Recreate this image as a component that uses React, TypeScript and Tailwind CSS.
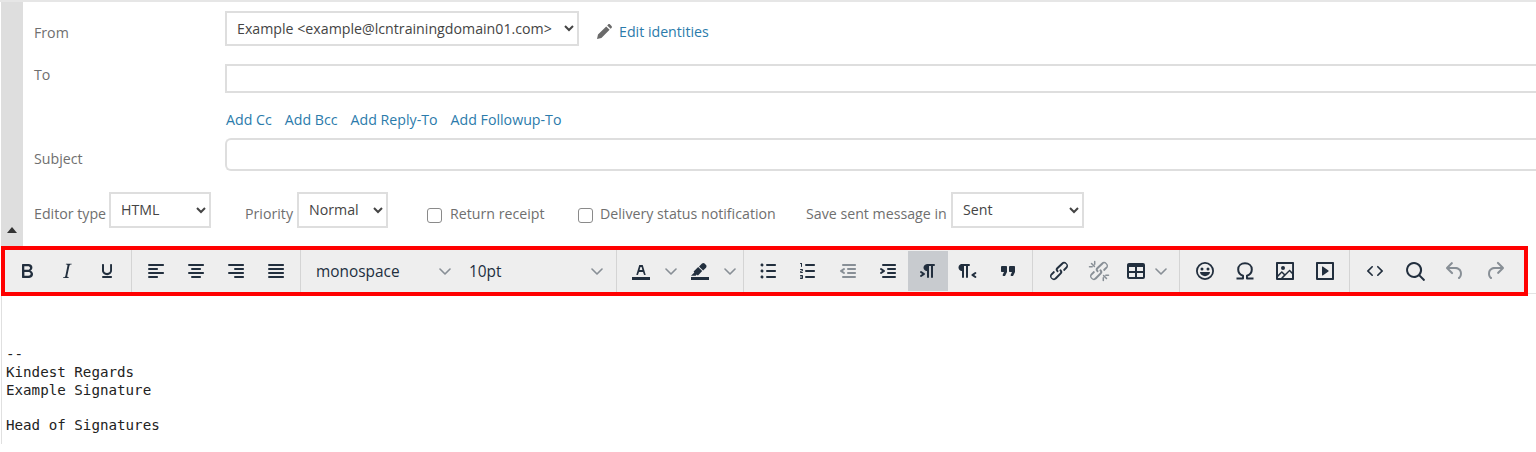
import React from "react";

const P: Record<string, React.ReactNode> = {
  bold: <path d="M7.8 19c-.3 0-.5 0-.6-.2l-.2-.5V5.7c0-.2 0-.4.2-.5l.6-.2h5c1.5 0 2.7.3 3.5 1 .7.6 1.1 1.4 1.1 2.5a3 3 0 01-.6 1.9c-.4.6-1 1-1.6 1.2.4.1.9.3 1.3.6s.8.7 1 1.2c.4.4.5 1 .5 1.6 0 1.3-.4 2.3-1.3 3-.8.7-2.1 1-3.8 1H7.8zm5-8.3c.6 0 1.2-.1 1.6-.5.4-.3.6-.7.6-1.3 0-1.1-.8-1.7-2.3-1.7H9.3v3.5h3.4zm.5 6c.7 0 1.3-.1 1.7-.4.4-.4.6-.9.6-1.5s-.2-1-.7-1.4c-.4-.3-1-.4-2-.4H9.4v3.8h4z" />,
  italic: <path d="M16.7 4.7l-.1.9h-.3c-.6 0-1 0-1.4.3-.3.3-.4.6-.5 1.1l-2.1 9.8v.6c0 .5.4.8 1.4.8h.2l-.2.8H8l.2-.8h.2c1.1 0 1.8-.5 2-1.5l2-9.8.1-.5c0-.6-.4-.8-1.4-.8h-.3l.2-.9h5.8z" />,
  underline: <path d="M16 5c.6 0 1 .4 1 1v5.5a4 4 0 01-.4 1.8l-1 1.4a5.3 5.3 0 01-5.5 1 5 5 0 01-1.6-1c-.5-.4-.8-.9-1.1-1.4a4 4 0 01-.4-1.8V6c0-.6.4-1 1-1s1 .4 1 1v5.5c0 .3 0 .6.2 1l.6.7a3.3 3.3 0 002.2.8 3.4 3.4 0 002.2-.8c.3-.2.5-.5.7-.8l.2-.9V6c0-.6.4-1 1-1zM8 17h8c.6 0 1 .4 1 1s-.4 1-1 1H8a1 1 0 010-2z" />,
  alignLeft: <path d="M5 5h14c.6 0 1 .4 1 1s-.4 1-1 1H5a1 1 0 110-2zm0 4h8c.6 0 1 .4 1 1s-.4 1-1 1H5a1 1 0 110-2zm0 8h8c.6 0 1 .4 1 1s-.4 1-1 1H5a1 1 0 010-2zm0-4h14c.6 0 1 .4 1 1s-.4 1-1 1H5a1 1 0 010-2z" />,
  alignCenter: <path d="M5 5h14c.6 0 1 .4 1 1s-.4 1-1 1H5a1 1 0 110-2zm3 4h8c.6 0 1 .4 1 1s-.4 1-1 1H8a1 1 0 110-2zm0 8h8c.6 0 1 .4 1 1s-.4 1-1 1H8a1 1 0 010-2zm-3-4h14c.6 0 1 .4 1 1s-.4 1-1 1H5a1 1 0 010-2z" />,
  alignRight: <path d="M5 5h14c.6 0 1 .4 1 1s-.4 1-1 1H5a1 1 0 110-2zm6 4h8c.6 0 1 .4 1 1s-.4 1-1 1h-8a1 1 0 010-2zm0 8h8c.6 0 1 .4 1 1s-.4 1-1 1h-8a1 1 0 010-2zm-6-4h14c.6 0 1 .4 1 1s-.4 1-1 1H5a1 1 0 010-2z" />,
  alignJustify: <path d="M5 5h14c.6 0 1 .4 1 1s-.4 1-1 1H5a1 1 0 110-2zm0 4h14c.6 0 1 .4 1 1s-.4 1-1 1H5a1 1 0 110-2zm0 4h14c.6 0 1 .4 1 1s-.4 1-1 1H5a1 1 0 010-2zm0 4h14c.6 0 1 .4 1 1s-.4 1-1 1H5a1 1 0 010-2z" />,
  textColor: <><path d="M3 18h18v3H3z" /><path d="M8.7 16h-.8a.5.5 0 01-.5-.6l2.7-9c.1-.3.3-.4.5-.4h2.8c.2 0 .4.1.5.4l2.7 9a.5.5 0 01-.5.6h-.8a.5.5 0 01-.4-.4l-.7-2.2c0-.3-.3-.4-.5-.4h-3.4c-.2 0-.4.1-.5.4l-.7 2.2c0 .3-.2.4-.4.4zm2.6-7.6l-.6 2a.5.5 0 00.5.6h1.6a.5.5 0 00.5-.6l-.6-2c0-.3-.3-.4-.5-.4h-.4c-.2 0-.4.1-.5.4z" /></>,
  highlight: <><path d="M3 18h18v3H3z" /><path d="M7.7 16.7H3l3.3-3.3-.7-.8L10.2 8l4 4.1-4 4.2c-.2.2-.6.2-.8 0l-.6-.7-1.1 1.1zm5-7.5L11 7.4l3-2.9a2 2 0 012.6 0L18 6c.7.7.7 2 0 2.7l-2.9 2.9-1.8-1.8-.5-.6z" /></>,
  bullets: <path d="M11 5h8c.6 0 1 .4 1 1s-.4 1-1 1h-8a1 1 0 010-2zm0 6h8c.6 0 1 .4 1 1s-.4 1-1 1h-8a1 1 0 010-2zm0 6h8c.6 0 1 .4 1 1s-.4 1-1 1h-8a1 1 0 010-2zM4.5 6c0-.4.1-.8.4-1 .3-.4.7-.5 1.1-.5.4 0 .8.1 1 .4.4.3.5.7.5 1.1 0 .4-.1.8-.4 1-.3.4-.7.5-1.1.5-.4 0-.8-.1-1-.4-.4-.3-.5-.7-.5-1.1zm0 6c0-.4.1-.8.4-1 .3-.4.7-.5 1.1-.5.4 0 .8.1 1 .4.4.3.5.7.5 1.1 0 .4-.1.8-.4 1-.3.4-.7.5-1.1.5-.4 0-.8-.1-1-.4-.4-.3-.5-.7-.5-1.1zm0 6c0-.4.1-.8.4-1 .3-.4.7-.5 1.1-.5.4 0 .8.1 1 .4.4.3.5.7.5 1.1 0 .4-.1.8-.4 1-.3.4-.7.5-1.1.5-.4 0-.8-.1-1-.4-.4-.3-.5-.7-.5-1.1z" />,
  numbers: <path d="M10 17h8c.6 0 1 .4 1 1s-.4 1-1 1h-8a1 1 0 010-2zm0-6h8c.6 0 1 .4 1 1s-.4 1-1 1h-8a1 1 0 010-2zm0-6h8c.6 0 1 .4 1 1s-.4 1-1 1h-8a1 1 0 110-2zM6 4v3.5c0 .3-.2.5-.5.5a.5.5 0 01-.5-.5V5h-.5a.5.5 0 010-1H6zm-1 8.8l.2.2h1.3c.3 0 .5.2.5.5s-.2.5-.5.5H4.9a1 1 0 01-.9-1V13c0-.4.3-.8.6-1l1.2-.4.2-.3a.2.2 0 00-.2-.2H4.5a.5.5 0 01-.5-.5c0-.3.2-.5.5-.5h1.6c.5 0 .9.4.9 1v.1c0 .4-.3.8-.6 1l-1.2.4-.2.3zM7 17v2c0 .6-.4 1-1 1H4.5a.5.5 0 010-1h1.2c.2 0 .3-.1.3-.3 0-.2-.1-.3-.3-.3H4.4a.4.4 0 110-.8h1.3c.2 0 .3-.1.3-.3 0-.2-.1-.3-.3-.3H4.5a.5.5 0 110-1H6c.6 0 1 .4 1 1z" />,
  outdent: <path d="M7 5h12c.6 0 1 .4 1 1s-.4 1-1 1H7a1 1 0 110-2zm5 4h7c.6 0 1 .4 1 1s-.4 1-1 1h-7a1 1 0 010-2zm0 4h7c.6 0 1 .4 1 1s-.4 1-1 1h-7a1 1 0 010-2zm-5 4h12a1 1 0 010 2H7a1 1 0 010-2zm1.6-3.8a1 1 0 01-1.2 1.6l-3-2a1 1 0 010-1.6l3-2a1 1 0 011.2 1.6L6.8 12l1.8 1.2z" />,
  indent: <path d="M7 5h12c.6 0 1 .4 1 1s-.4 1-1 1H7a1 1 0 110-2zm5 4h7c.6 0 1 .4 1 1s-.4 1-1 1h-7a1 1 0 010-2zm0 4h7c.6 0 1 .4 1 1s-.4 1-1 1h-7a1 1 0 010-2zm-5 4h12a1 1 0 010 2H7a1 1 0 010-2zm-2.6-3.8L6.2 12l-1.8-1.2a1 1 0 011.2-1.6l3 2a1 1 0 010 1.6l-3 2a1 1 0 11-1.2-1.6z" />,
  ltr: <path d="M11 5h7a1 1 0 010 2h-1v11a1 1 0 01-2 0V7h-2v11a1 1 0 01-2 0v-6c-.5 0-1 0-1.4-.3A3.4 3.4 0 017.8 10a3.3 3.3 0 010-2.8 3.4 3.4 0 011.8-1.8L11 5zM4.4 16.2L6.2 15l-1.8-1.2a1 1 0 011.2-1.6l3 2a1 1 0 010 1.6l-3 2a1 1 0 11-1.2-1.6z" />,
  rtl: <><path transform="translate(-3 0)" d="M8 5h8a1 1 0 010 2h-1v11a1 1 0 01-2 0V7h-2v11a1 1 0 01-2 0v-6c-.5 0-1 0-1.4-.3a3.4 3.4 0 01-1.8-1.8 3.3 3.3 0 010-2.8 3.4 3.4 0 011.8-1.8L8 5z" /><path d="M20 14.8L18.2 16l1.8 1.2a1 1 0 01-1.2 1.6l-3-2a1 1 0 010-1.6l3-2a1 1 0 011.2 1.6z" /></>,
  quote: <path d="M7.5 17h.9c.4 0 .7-.2.9-.6L11 13V8c0-.6-.4-1-1-1H6a1 1 0 00-1 1v4c0 .6.4 1 1 1h2l-1.3 2.7a1 1 0 00.8 1.3zm8 0h.9c.4 0 .7-.2.9-.6L19 13V8c0-.6-.4-1-1-1h-4a1 1 0 00-1 1v4c0 .6.4 1 1 1h2l-1.3 2.7a1 1 0 00.8 1.3z" />,
  link: <path d="M6.2 12.3a1 1 0 011.4 1.4l-2 2a2 2 0 102.6 2.8l4.8-4.8a1 1 0 000-1.4 1 1 0 111.4-1.3 2.9 2.9 0 010 4L9.6 20a3.9 3.9 0 01-5.5-5.5l2-2zm11.6-.6a1 1 0 01-1.4-1.4l2-2a2 2 0 10-2.6-2.8L11 9.9a1 1 0 000 1.4 1 1 0 11-1.4 1.3 2.9 2.9 0 010-4L14.4 4a3.9 3.9 0 015.5 5.5l-2 2z" />,
  unlink: <><path d="M6.2 12.3a1 1 0 011.4 1.4l-2.1 2a2 2 0 102.7 2.8l4.8-4.8a1 1 0 000-1.4 1 1 0 111.4-1.3 2.9 2.9 0 010 4L9.6 20a3.9 3.9 0 01-5.5-5.5l2-2zm11.6-.6a1 1 0 01-1.4-1.4l2.1-2a2 2 0 10-2.7-2.8L11 9.9a1 1 0 000 1.4 1 1 0 11-1.4 1.3 2.9 2.9 0 010-4L14.4 4a3.9 3.9 0 015.5 5.5l-2 2z" /><path d="M7.4 7.4L4.5 4.5M7.7 2.5v2.7M2.5 7.7h2.7M16.6 16.6l2.9 2.9M16.3 21.5v-2.7M21.5 16.3h-2.7" stroke="currentColor" strokeWidth="1.5" strokeLinecap="round" fill="none" /></>,
  table: <path d="M19 4a2 2 0 012 2v12a2 2 0 01-2 2H5a2 2 0 01-2-2V6c0-1.1.9-2 2-2h14zM5 14v4h6v-4H5zm14 0h-6v4h6v-4zm0-6h-6v4h6V8zM5 12h6V8H5v4z" />,
  emoji: <path fillRule="evenodd" d="M12 3a9 9 0 110 18 9 9 0 010-18zm0 1.8a7.2 7.2 0 100 14.4 7.2 7.2 0 000-14.4zM9 8.5a1.5 1.5 0 110 3 1.5 1.5 0 010-3zm6 0a1.5 1.5 0 110 3 1.5 1.5 0 010-3zM7.5 13h9a.5.5 0 01.5.6c-.5 2.1-2.5 3.6-5 3.6s-4.5-1.5-5-3.6a.5.5 0 01.5-.6z" />,
  omega: <path fill="none" stroke="currentColor" strokeWidth="2" strokeLinejoin="round" d="M3.5 19.5H10v-2.8c-2.8-1-4.8-3.4-4.8-6.3C5.2 6.7 8.2 4.3 12 4.3s6.8 2.4 6.8 6.1c0 2.9-2 5.3-4.8 6.3v2.8h6.5" />,
  image: <path d="M5 15.7l3.3-3.2c.3-.3.7-.3 1 0L12 15l4.1-4c.3-.4.8-.4 1 0l2 1.9V5H5v10.7zM5 18V19h3l2.8-2.9-2-2L5 17.9zm14-3l-2.5-2.4-6.4 6.5H19v-4zM4 3h16c.6 0 1 .4 1 1v16c0 .6-.4 1-1 1H4a1 1 0 01-1-1V4c0-.6.4-1 1-1zm6 8a2 2 0 100-4 2 2 0 000 4z" />,
  media: <path d="M4 3h16c.6 0 1 .4 1 1v16c0 .6-.4 1-1 1H4a1 1 0 01-1-1V4c0-.6.4-1 1-1zm1 2v14h14V5H5zm4.8 2.6l5.6 4a.5.5 0 010 .8l-5.6 4A.5.5 0 019 16V8a.5.5 0 01.8-.4z" />,
  code: <path d="M9.8 15.7c.3.3.3.8 0 1-.3.4-.9.4-1.2 0l-4.4-4.1a.8.8 0 010-1.2l4.4-4.2c.3-.3.9-.3 1.2 0 .3.3.3.8 0 1.1L6 12l3.8 3.7zm4.4 0c-.3.3-.3.8 0 1 .3.4.9.4 1.2 0l4.4-4.1a.8.8 0 000-1.2l-4.4-4.2a.8.8 0 00-1.2 0c-.3.3-.3.8 0 1.1L18 12l-3.8 3.7z" />,
  search: <path d="M16 17.3a8 8 0 111.4-1.4l4.3 4.4a1 1 0 01-1.4 1.4l-4.4-4.4zm-5-.3a6 6 0 100-12 6 6 0 000 12z" />,
  undo: <path d="M6.4 8H12c3.7 0 6.2 2 6.8 5.1.6 2.7-.4 5.6-2.3 6.8a1 1 0 01-1-1.8c1.1-.6 1.8-2.7 1.4-4.6-.5-2.1-2.1-3.5-4.9-3.5H6.4l3.3 3.3a1 1 0 11-1.4 1.4l-5-5a1 1 0 010-1.4l5-5a1 1 0 011.4 1.4L6.4 8z" />,
  redo: <path d="M17.6 10H12c-2.8 0-4.4 1.4-4.9 3.5-.4 2 .3 4 1.4 4.6a1 1 0 11-1 1.8c-2-1.2-2.9-4.1-2.3-6.8.6-3 3.1-5.1 6.8-5.1h5.6l-3.3-3.3a1 1 0 111.4-1.4l5 5a1 1 0 010 1.4l-5 5a1 1 0 01-1.4-1.4l3.3-3.3z" />,
};

function Btn({ name, dim, active, w = "w-10" }: { name: string; dim?: boolean; active?: boolean; w?: string }) {
  return (
    <button className={`${w} h-10 flex items-center justify-center ${active ? "bg-[#c8cbcf]" : ""} ${dim ? "text-[#222f3e]/50" : "text-[#222f3e]"}`}>
      <svg width="24" height="24" viewBox="0 0 24 24" fill="currentColor">{P[name]}</svg>
    </button>
  );
}

function Chev({ w = "w-[19px]" }: { w?: string }) {
  return (
    <span className={`${w} h-10 flex items-center justify-center`}>
      <svg width="12" height="7" viewBox="0 0 12 7" fill="none" stroke="#222f3e" strokeOpacity="0.5" strokeWidth="1.6" strokeLinecap="round" strokeLinejoin="round"><path d="M1 1l5 5 5-5" /></svg>
    </span>
  );
}

function Group({ className, children }: { className: string; children: React.ReactNode }) {
  return <div className={`flex items-center border-r border-[#d4d4d4] last:border-r-0 ${className}`}>{children}</div>;
}

function FontSel({ label, w, pr }: { label: string; w: string; pr: string }) {
  return (
    <div className={`${w} ${pr} pl-[11px] h-10 flex items-center justify-between text-[15.4px] text-[#222f3e]`}>
      <span className="translate-y-[1px]">{label}</span>
      <svg width="12" height="7" viewBox="0 0 12 7" fill="none" stroke="#222f3e" strokeOpacity="0.5" strokeWidth="1.6" strokeLinecap="round" strokeLinejoin="round"><path d="M1 1l5 5 5-5" /></svg>
    </div>
  );
}

const labelCls = "text-[14.2px] leading-[20px] text-[#6f6f6f] whitespace-nowrap";
const linkCls = "text-[14.2px] leading-[20px] text-[#2b7bab] whitespace-nowrap";
const selectCls = "bg-white border-2 border-[#dedede] text-[14.2px] text-[#444] h-9 pl-[6px] pb-[1px] outline-none";

export default function App() {
  return (
    <div className="w-[1536px] h-[452px] overflow-hidden bg-white font-['Open_Sans',sans-serif]">
      <div className="flex h-[246px] border-t-2 border-[#e6e6e6]">
        <div className="ml-[1px] w-[22px] bg-[#dedede] flex flex-col items-center justify-end pb-[13px]">
          <svg width="10" height="6" viewBox="0 0 10 6" fill="#333"><path d="M5 0l5 6H0z" /></svg>
        </div>
        <div className="flex-1 min-w-0 flex flex-col pt-[9px]">
          <div className="flex items-start">
            <label className={`${labelCls} w-[202px] pl-[11px] mt-[12px]`}>From</label>
            <select className={`${selectCls} w-[354px] h-[35px]`} defaultValue="a">
              <option value="a">Example &lt;example@lcntrainingdomain01.com&gt;</option>
            </select>
            <svg className="ml-[18px] mt-[13px]" width="15" height="15" viewBox="0 0 15 15" fill="#6a6a6a"><path d="M0 15l1-4.4L9.2 2.4l3.4 3.4L4.4 14zM10.2 1.4l.9-.9c.6-.6 1.4-.6 2 0l1.4 1.4c.6.6.6 1.4 0 2l-.9.9z" /></svg>
            <a className={`${linkCls} ml-[7px] mt-[11px]`}>Edit identities</a>
          </div>
          <div className="flex items-start mt-[18px]">
            <label className={`${labelCls} w-[202px] pl-[11px] mt-[1px]`}>To</label>
            <input className="flex-1 h-[29px] border-2 border-r-0 border-[#dedede] bg-white outline-none" />
          </div>
          <div className="h-[45px] flex items-end gap-[13px] pl-[203px] pb-[8px]">
            <a className={linkCls}>Add Cc</a>
            <a className={linkCls}>Add Bcc</a>
            <a className={linkCls}>Add Reply-To</a>
            <a className={linkCls}>Add Followup-To</a>
          </div>
          <div className="flex items-start">
            <label className={`${labelCls} w-[202px] pl-[11px] mt-[11px]`}>Subject</label>
            <input className="flex-1 h-[33px] border-2 border-r-0 border-[#dedede] rounded-l-[6px] bg-white outline-none" />
          </div>
          <div className="flex items-start mt-[21px] pl-[11px]">
            <label className={`${labelCls} mt-[12px] w-[75px]`}>Editor type</label>
            <select className={`${selectCls} w-[102px]`} defaultValue="HTML"><option>HTML</option></select>
            <label className={`${labelCls} mt-[12px] ml-[34px] w-[52px]`}>Priority</label>
            <select className={`${selectCls} w-[91px]`} defaultValue="Normal"><option>Normal</option></select>
            <input type="checkbox" className="appearance-none w-[15px] h-[15px] mt-[16px] ml-[39px] rounded-[3px] border-[1.5px] border-[#8a8a8a] bg-white" />
            <label className={`${labelCls} mt-[12px] ml-[8px] w-[128px]`}>Return receipt</label>
            <input type="checkbox" className="appearance-none w-[15px] h-[15px] mt-[16px] rounded-[3px] border-[1.5px] border-[#8a8a8a] bg-white" />
            <label className={`${labelCls} mt-[12px] ml-[7px] w-[206px]`}>Delivery status notification</label>
            <label className={`${labelCls} mt-[12px] w-[145px]`}>Save sent message in</label>
            <select className={`${selectCls} w-[133px]`} defaultValue="Sent"><option>Sent</option></select>
          </div>
        </div>
      </div>

      <div className="flex h-[50px] ml-[1px]">
        <div className="w-[1527px] border-4 border-[#ff0000] bg-[#eeeeee] flex">
          <Group className="pl-[2px] pr-[4px]">
            <Btn name="bold" /><Btn name="italic" /><Btn name="underline" />
          </Group>
          <Group className="px-[4px]">
            <Btn name="alignLeft" /><Btn name="alignCenter" /><Btn name="alignRight" /><Btn name="alignJustify" />
          </Group>
          <Group className="px-[4px]">
            <FontSel label="monospace" w="w-[153px]" pr="pr-[7px]" />
            <FontSel label="10pt" w="w-[154px]" pr="pr-[9px]" />
          </Group>
          <Group className="px-[4px]">
            <Btn name="textColor" /><Chev /><Btn name="highlight" /><Chev />
          </Group>
          <Group className="px-[4px]">
            <Btn name="bullets" /><Btn name="numbers" /><Btn name="outdent" dim /><Btn name="indent" /><Btn name="ltr" active /><Btn name="rtl" /><Btn name="quote" />
          </Group>
          <Group className="pl-[6px] pr-[10px]">
            <Btn name="link" /><Btn name="unlink" dim /><Btn name="table" w="w-[34px]" /><Chev w="w-4" />
          </Group>
          <Group className="pl-[5px] pr-[4px]">
            <Btn name="emoji" /><Btn name="omega" /><Btn name="image" /><Btn name="media" />
          </Group>
          <Group className="pl-[5px]">
            <Btn name="code" /><Btn name="search" /><Btn name="undo" dim /><Btn name="redo" dim />
          </Group>
        </div>
        <div className="flex-1 h-[48px] border-b border-[#e4e4e4]" />
      </div>

      <div className="ml-[1px] h-[148px] border-l border-[#e0e0e0] pt-[49px] pl-[4px] font-['DejaVu_Sans_Mono',monospace] text-[14.2px] leading-[18px] text-[#222]">
        <div>--</div>
        <div>Kindest Regards</div>
        <div>Example Signature</div>
        <div className="h-[17px]" />
        <div>Head of Signatures</div>
      </div>
    </div>
  );
}
